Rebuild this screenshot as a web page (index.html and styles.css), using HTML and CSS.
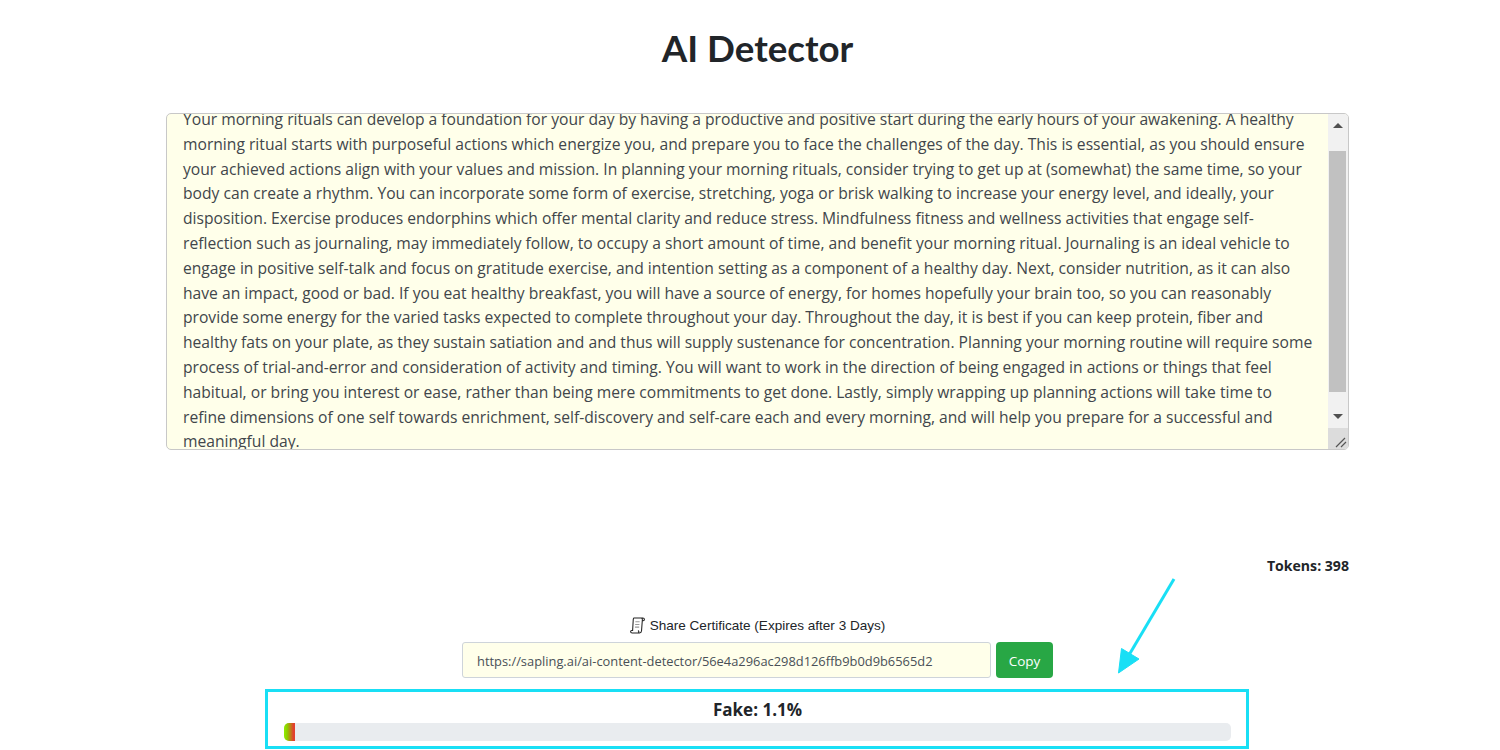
FILE: index.html
```
<!DOCTYPE html>
<html lang="en">
<head>
<meta charset="utf-8">
<title>AI Detector</title>
<link rel="stylesheet" href="styles.css">
</head>
<body>
<main class="page">
  <h1 class="title">AI Detector</h1>
  <section class="editor">
    <div class="editor-text"><div class="editor-lines">Your morning rituals can develop a foundation for your day by having a productive and positive start during the early hours of your awakening. A healthy<br>morning ritual starts with purposeful actions which energize you, and prepare you to face the challenges of the day. This is essential, as you should ensure<br>your achieved actions align with your values and mission. In planning your morning rituals, consider trying to get up at (somewhat) the same time, so your<br>body can create a rhythm. You can incorporate some form of exercise, stretching, yoga or brisk walking to increase your energy level, and ideally, your<br>disposition. Exercise produces endorphins which offer mental clarity and reduce stress. Mindfulness fitness and wellness activities that engage self-<br>reflection such as journaling, may immediately follow, to occupy a short amount of time, and benefit your morning ritual. Journaling is an ideal vehicle to<br>engage in positive self-talk and focus on gratitude exercise, and intention setting as a component of a healthy day. Next, consider nutrition, as it can also<br>have an impact, good or bad. If you eat healthy breakfast, you will have a source of energy, for homes hopefully your brain too, so you can reasonably<br>provide some energy for the varied tasks expected to complete throughout your day. Throughout the day, it is best if you can keep protein, fiber and<br>healthy fats on your plate, as they sustain satiation and and thus will supply sustenance for concentration. Planning your morning routine will require some<br>process of trial-and-error and consideration of activity and timing. You will want to work in the direction of being engaged in actions or things that feel<br>habitual, or bring you interest or ease, rather than being mere commitments to get done. Lastly, simply wrapping up planning actions will take time to<br>refine dimensions of one self towards enrichment, self-discovery and self-care each and every morning, and will help you prepare for a successful and<br>meaningful day.</div></div>
    <div class="scrollbar">
      <div class="scroll-btn"><span class="tri-up"></span></div>
      <div class="scroll-track"><div class="scroll-thumb"></div></div>
      <div class="scroll-btn"><span class="tri-down"></span></div>
      <div class="scroll-corner">
        <svg width="17" height="17" viewBox="0 0 17 17"><path d="M5 15 14 6M10 15 15 10" stroke="#555" stroke-width="1.2" fill="none"/></svg>
      </div>
    </div>
  </section>
  <div class="tokens">Tokens: 398</div>
  <div class="share-label">
    <svg class="scroll-icon" width="15" height="17" viewBox="0 0 14 16"><path d="M3.500 1h8.500c.9 0 1.500.6 1.500 1.300 0 .7-.5 1.200-1.200 1.200H11.500L10.800 13c-.1 1.200-.8 2-1.900 2H2c-1 0-1.500-.6-1.500-1.300 0-.6.4-1 1-1h.9L3 2.300C3.100 1.600 3.300 1 3.500 1zM10.800 1c.8.500 1 1.500.7 2.500M7.500 12.700c.7.400.9 1.500.5 2.300" fill="none" stroke="#222" stroke-width="1"/><path d="M5 4.500h4M4.800 7h4M4.600 9.500h4" fill="none" stroke="#999" stroke-width="1"/></svg>
    <span>Share Certificate (Expires after 3 Days)</span>
  </div>
  <div class="share-row">
    <div class="share-url">https://sapling.ai/ai-content-detector/56e4a296ac298d126ffb9b0d9b6565d2</div>
    <button class="copy-btn">Copy</button>
  </div>
  <section class="result">
    <div class="result-label">Fake: 1.1%</div>
    <div class="bar"><div class="bar-fill"></div></div>
  </section>
</main>
<svg class="arrow" width="70" height="105" viewBox="0 0 70 105"><path d="M57 1 12 77" stroke="#19dff5" stroke-width="3" fill="none"/><path d="M1.500 95 4.500 70.500 22 81Z" fill="#19dff5" stroke="#19dff5" stroke-width="1"/></svg>
</body>
</html>
```

FILE: styles.css
```
* { box-sizing: border-box; }
html, body { margin: 0; padding: 0; }
body {
  width: 1500px;
  height: 750px;
  overflow: hidden;
  background: #fff;
  color: #212529;
  font-family: "Open Sans", sans-serif;
  position: relative;
}
.page {
  width: 1183px;
  margin-left: 166px;
  display: flex;
  flex-direction: column;
}
.title {
  margin: 0;
  padding-top: 25px;
  height: 113px;
  text-align: center;
  font-family: Lato, sans-serif;
  font-size: 36.700px;
  line-height: 46px;
  font-weight: 700;
}
.editor {
  height: 337px;
  display: flex;
  border: 1px solid #c8c8c8;
  border-radius: 5px;
  background: #ffffea;
  overflow: hidden;
}
.editor-text {
  flex: 1;
  overflow: hidden;
  padding-left: 16px;
}
.editor-lines {
  margin-top: -7px;
  font-size: 15.650px;
  line-height: 24.800px;
  color: #41464b;
  white-space: nowrap;
}
.scrollbar {
  width: 20px;
  display: flex;
  flex-direction: column;
  background: #f1f1f1;
}
.scroll-btn {
  height: 17px;
  flex: none;
  display: flex;
  align-items: center;
  justify-content: center;
}
.tri-up, .tri-down {
  width: 0;
  height: 0;
  border-left: 5px solid transparent;
  border-right: 5px solid transparent;
}
.tri-up { border-bottom: 5px solid #505050; margin-top: 5px; }
.tri-down { border-top: 5px solid #505050; margin-bottom: 6px; }
.scroll-track {
  flex: 1;
  padding: 20px 2px 19px 1px;
  display: flex;
}
.scroll-thumb { flex: 1; background: #c1c1c1; }
.scroll-corner {
  height: 21px;
  flex: none;
  background: #dcdcdc;
  display: flex;
  align-items: flex-end;
  justify-content: flex-end;
}
.tokens {
  margin-top: 106px;
  height: 20px;
  text-align: right;
  font-size: 14.100px;
  line-height: 20px;
  font-weight: 700;
}
.share-label {
  margin-top: 39px;
  height: 20px;
  display: flex;
  align-items: center;
  justify-content: center;
  gap: 5px;
  font-family: "Liberation Sans", sans-serif;
  font-size: 13.550px;
  color: #212529;
}
.share-row {
  margin-top: 7px;
  margin-left: 296px;
  display: flex;
  gap: 5px;
}
.share-url {
  width: 529px;
  height: 36px;
  padding-left: 14px;
  border: 1px solid #ced4da;
  border-radius: 3px;
  background: #ffffea;
  font-size: 12.870px;
  line-height: 36px;
  color: #495057;
}
.copy-btn {
  width: 57px;
  height: 36px;
  border: 0;
  border-radius: 4px;
  background: #28a745;
  color: #fff;
  font-family: "Open Sans", sans-serif;
  font-size: 13.500px;
  padding: 2px 0 0;
}
.result {
  margin-top: 11px;
  margin-left: 99px;
  width: 984px;
  height: 60px;
  border: 3px solid #19dff5;
  padding: 0 15px 0 16px;
}
.result-label {
  height: 31px;
  padding-top: 6px;
  text-align: center;
  font-size: 17px;
  line-height: 24px;
  font-weight: 700;
}
.bar {
  height: 18px;
  background: #e9ecef;
  border-radius: 5px;
  overflow: hidden;
}
.bar-fill {
  width: 11px;
  height: 100%;
  background: linear-gradient(to right, #90ee00, #8fcc00 30%, #e2402e 85%);
}
.arrow {
  position: absolute;
  left: 1117px;
  top: 578px;
}
```
